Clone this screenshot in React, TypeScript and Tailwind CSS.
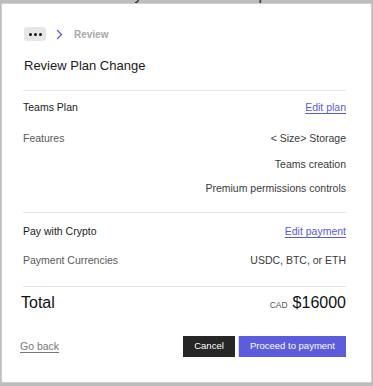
import React from "react";

const font = { fontFamily: '"Liberation Sans", Arial, sans-serif' };

function Row({ label, value, h, link }: { label: string; value: string; h: string; link?: boolean }) {
  return (
    <div className={`flex items-center justify-between ${h}`}>
      <span className={link ? "text-[10.5px] text-[#1a1a1a]" : "text-[10.5px] text-[#5a5a5a]"}>{label}</span>
      {link ? (
        <a className="text-[10.5px] text-[#5b5bd8] underline underline-offset-2 decoration-[#5b5bd8]">{value}</a>
      ) : (
        <span className="text-[10.5px] text-[#3a3a3a]">{value}</span>
      )}
    </div>
  );
}

export default function App() {
  return (
    <div className="relative h-[386px] w-[373px] overflow-hidden bg-[#bdbdbd]" style={font}>
      <div className="flex items-end h-[4px] overflow-visible">
        <div className="flex items-end -mt-[14px] h-[18px] w-full">
          <span className="ml-[-2px] text-[10px] leading-[18px] text-[#444]">s and Display</span>
          <span className="ml-[58px] text-[15px] leading-[18px] text-[#222]">Payment and Subscriptions</span>
        </div>
      </div>

      <div className="absolute left-[1px] top-[3px] w-[371px] h-[380px] bg-white border border-[#cfcfcf] rounded-[2px] pl-[21px] pr-[25px] pt-[22px]">
        <div className="flex items-center h-[16px] gap-[10px] pl-[1px]">
          <div className="flex items-center justify-center gap-[2px] w-[22px] h-[14px] rounded-[3px] bg-[#e6e6e6]">
            <span className="w-[3px] h-[3px] rounded-full bg-[#111]" />
            <span className="w-[3px] h-[3px] rounded-full bg-[#111]" />
            <span className="w-[3px] h-[3px] rounded-full bg-[#111]" />
          </div>
          <svg width="7" height="11" viewBox="0 0 7 11" fill="none">
            <path d="M1 1 L5.5 5.5 L1 10" stroke="#5b5bd8" strokeWidth="1.3" />
          </svg>
          <span className="ml-[1px] text-[10px] font-bold text-[#a8a8a8]">Review</span>
        </div>

        <div className="mt-[14px] h-[20px] flex items-center pl-[1px] text-[13px] text-[#1a1a1a]">Review Plan Change</div>

        <div className="mt-[14px] h-px bg-[#e6e6e6]" />

        <Row label="Teams Plan" value="Edit plan" h="h-[34px]" link />
        <div className="flex justify-between">
          <div className="h-[27px] flex items-center text-[10.5px] text-[#5a5a5a]">Features</div>
          <div className="flex flex-col items-end text-[10.5px] text-[#3a3a3a]">
            <div className="h-[27px] flex items-center">&lt; Size&gt; Storage</div>
            <div className="h-[25px] flex items-center">Teams creation</div>
            <div className="h-[24px] flex items-center">Premium permissions controls</div>
          </div>
        </div>
        <div className="mt-[11px] h-px bg-[#e6e6e6]" />

        <Row label="Pay with Crypto" value="Edit payment" h="h-[38px]" link />
        <Row label="Payment Currencies" value="USDC, BTC, or ETH" h="h-[20px]" />
        <div className="mt-[15px] h-px bg-[#e6e6e6]" />

        <div className="flex items-center justify-between h-[32px]">
          <span className="text-[16px] text-[#111] -ml-[2px]">Total</span>
          <span className="flex items-baseline gap-[5px]">
            <span className="text-[8.5px] text-[#555]">CAD</span>
            <span className="text-[16px] text-[#111]">$16000</span>
          </span>
        </div>

        <div className="mt-[17px] flex items-center justify-between h-[21px]">
          <a className="-ml-[3px] text-[10.5px] text-[#777] underline underline-offset-2">Go back</a>
          <div className="flex items-stretch h-[21px]">
            <button className="w-[52px] bg-[#262626] text-white text-[9.5px]">Cancel</button>
            <div className="w-[4px] border-r border-[#d8d8e8]" />
            <button className="w-[107px] bg-[#5c5cdc] text-white text-[9.5px]">Proceed to payment</button>
          </div>
        </div>
      </div>
    </div>
  );
}
